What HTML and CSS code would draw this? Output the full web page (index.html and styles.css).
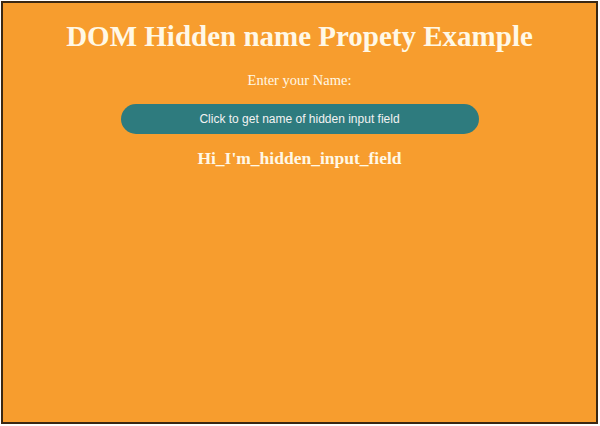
FILE: index.html
```html
<!DOCTYPE html>
<html lang="en">
<head>
    <meta charset="UTF-8">
    <link rel="stylesheet" href="styles.css">
    <title>DOM Hidden name Property</title>
    <script type="text/javascript">
        function showName() {
            var field = document.getElementById("hiddenField");
            document.getElementById("result").innerText = field.name;
        }
    </script>
</head>
<body>
<div class="page">
    <h1 class="title">DOM Hidden name Propety Example</h1>
    <p class="label">Enter your Name:</p>
    <input type="hidden" id="hiddenField" name="Hi_I'm_hidden_input_field">
    <div class="center">
        <button class="button" onclick="showName()">Click to get name of hidden input field</button>
    </div>
    <p class="result" id="result">Hi_I'm_hidden_input_field</p>
</div>
</body>
</html>
```
FILE: styles.css
```css
html, body {
    margin: 0;
    padding: 0;
    background: #ffffff;
}
.page {
    margin: 1px 2px 0 1px;
    height: 419px;
    border: 2px solid #3b2813;
    background-color: #f79d2e;
    color: #fff8e6;
    font-family: "Liberation Serif", "Times New Roman", serif;
    text-align: center;
}
.title {
    margin: 0;
    padding-top: 17px;
    font-size: 29px;
    font-weight: bold;
}
.label {
    margin: 19px 0 0;
    font-size: 14.5px;
}
.center {
    margin-top: 15px;
}
.button {
    background-color: #2e7b7e;
    border: none;
    border-radius: 15px;
    color: #f2f2f2;
    width: 358px;
    height: 30px;
    font-family: "Liberation Sans", Arial, sans-serif;
    font-size: 12px;
    cursor: pointer;
}
.result {
    margin: 14px 0 0;
    font-size: 17.5px;
    font-weight: bold;
}
```
